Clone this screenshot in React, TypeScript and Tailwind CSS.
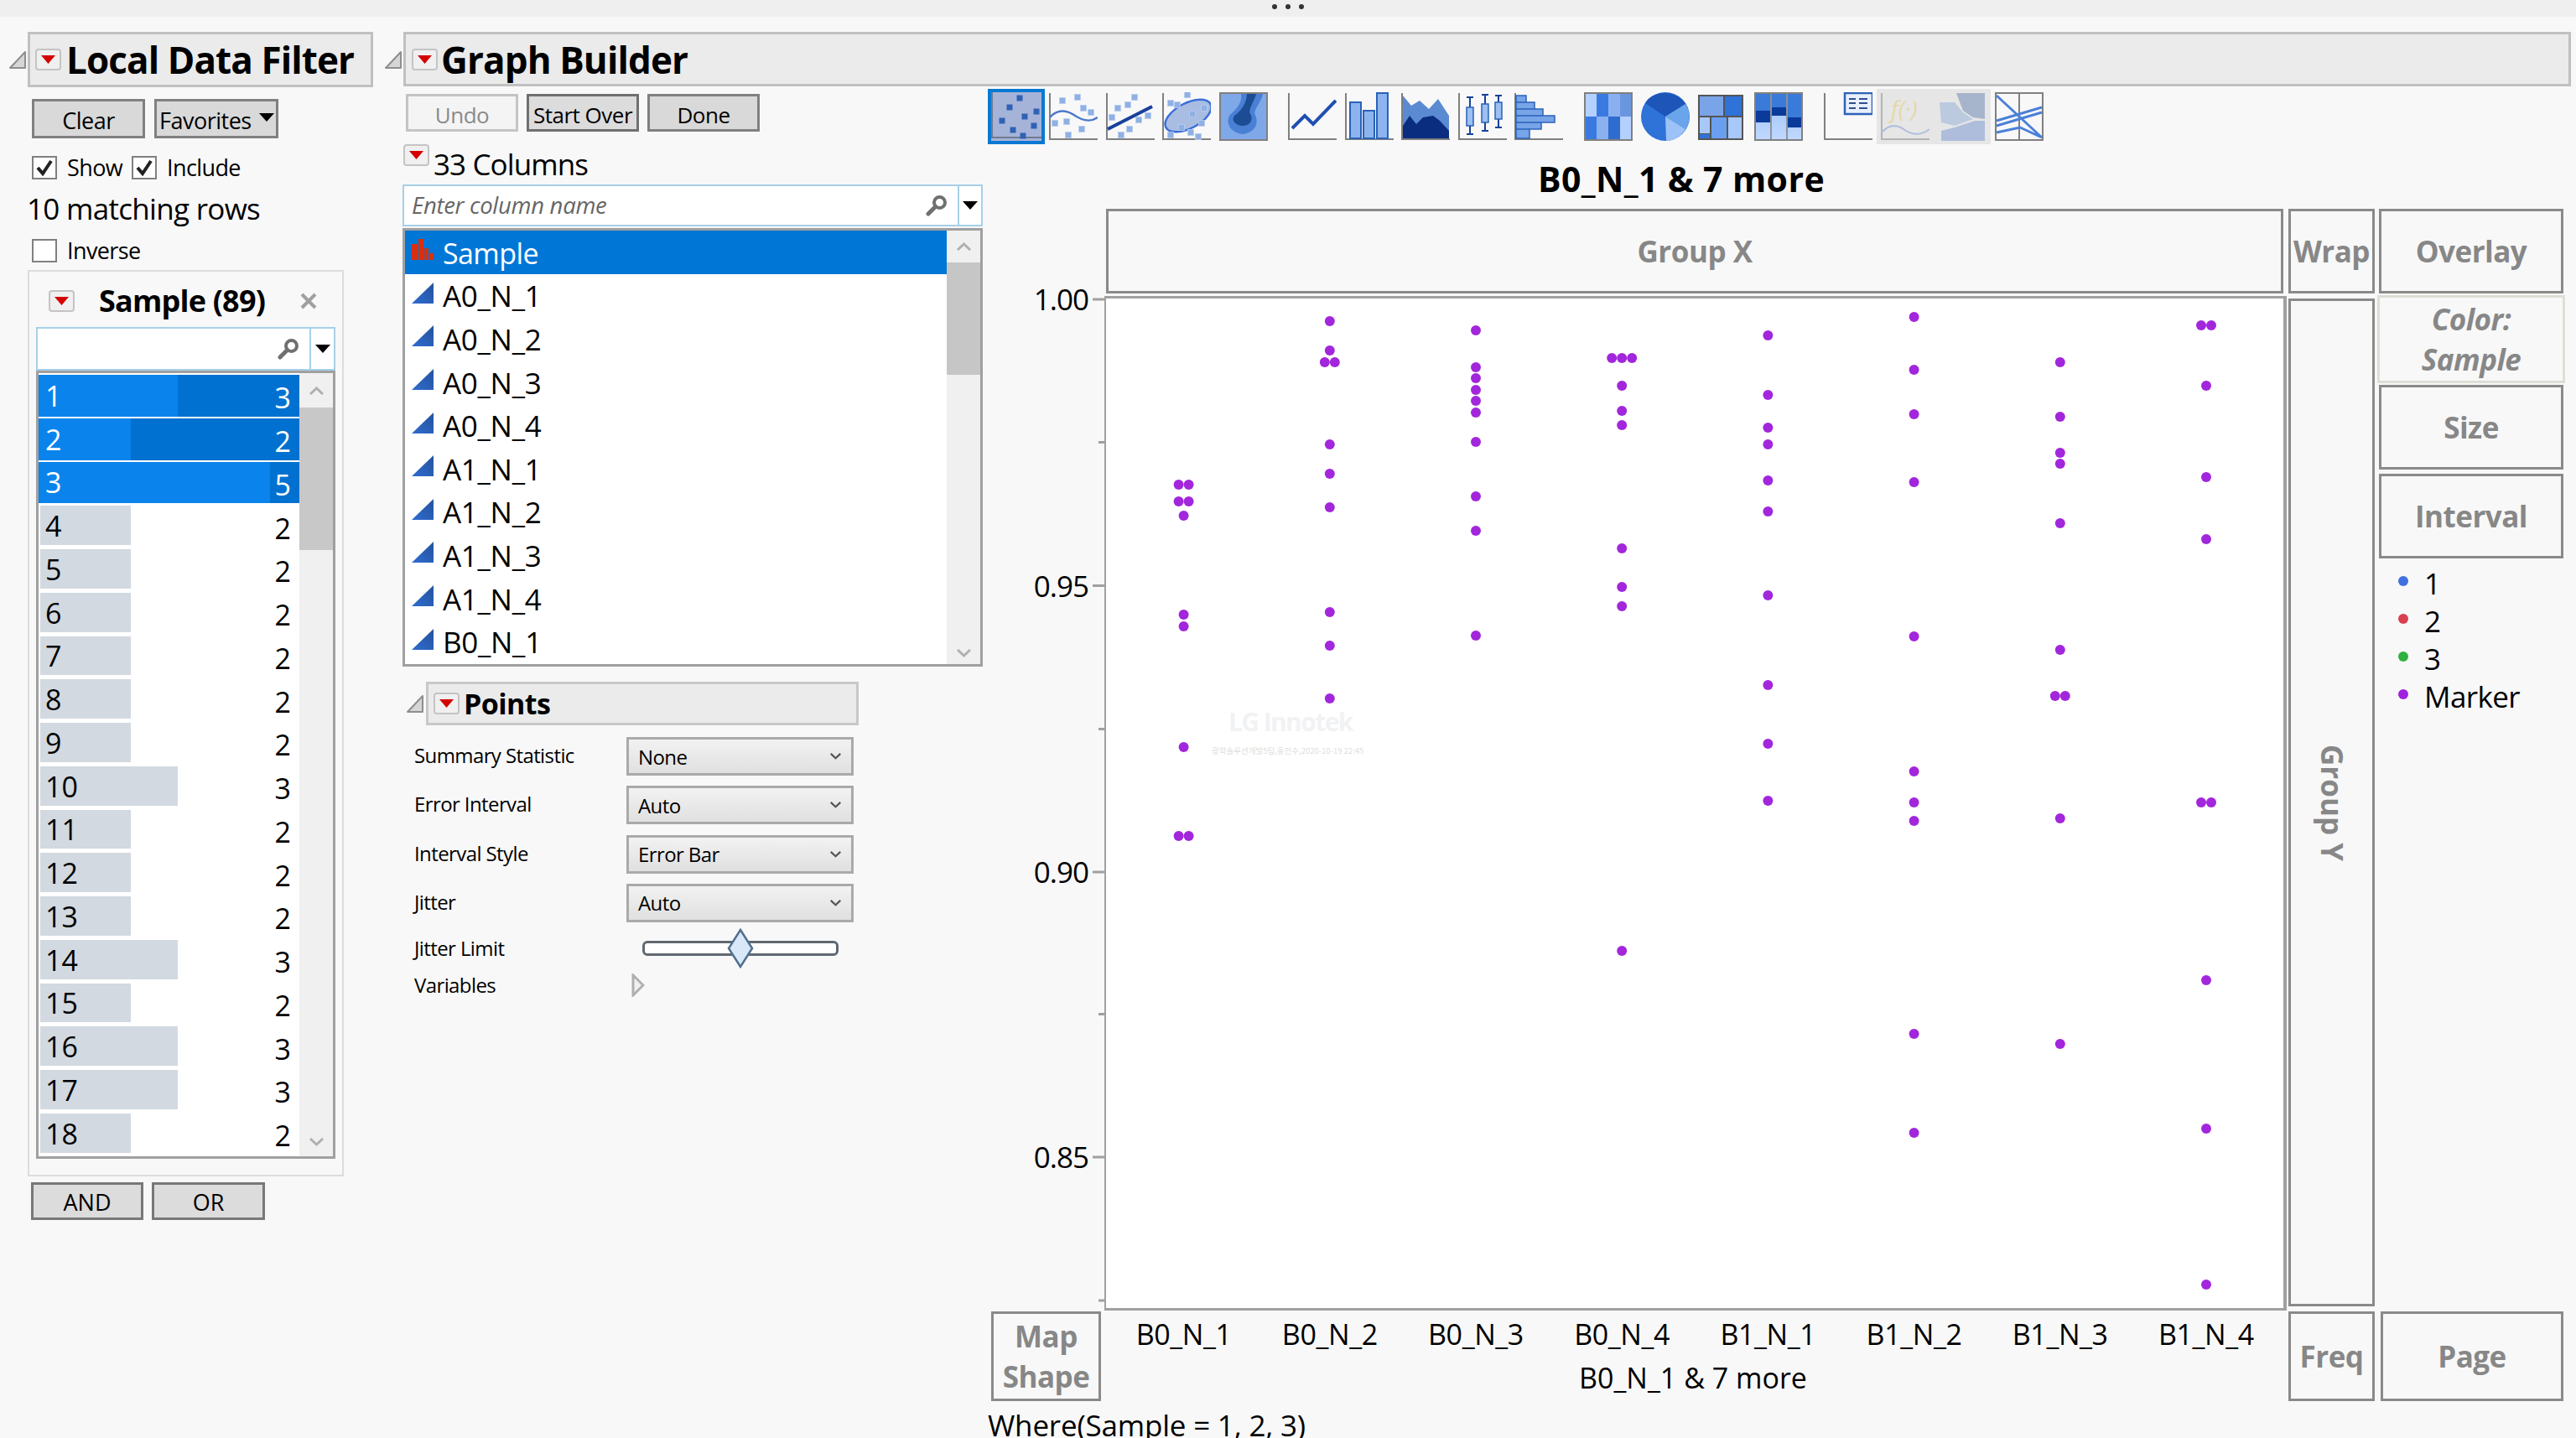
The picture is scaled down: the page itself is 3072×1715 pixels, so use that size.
import type { ReactNode } from "react";

const sampleRows = [
  [1, 3], [2, 2], [3, 5], [4, 2], [5, 2], [6, 2], [7, 2], [8, 2], [9, 2],
  [10, 3], [11, 2], [12, 2], [13, 2], [14, 3], [15, 2], [16, 3], [17, 3], [18, 2],
];
const barWidth: Record<number, number> = { 2: 108, 3: 164, 5: 274 };
const columns = ["A0_N_1", "A0_N_2", "A0_N_3", "A0_N_4", "A1_N_1", "A1_N_2", "A1_N_3", "A1_N_4", "B0_N_1"];
const axisNames = ["B0_N_1", "B0_N_2", "B0_N_3", "B0_N_4", "B1_N_1", "B1_N_2", "B1_N_3", "B1_N_4"];
const colX = [1411.6, 1585.8, 1760, 1934.2, 2108.4, 2282.6, 2456.8, 2631];

// [column, side offset in markers, y on the page]
const points: number[][] = [
  [0, -1, 578], [0, 1, 578], [0, -1, 598], [0, 1, 598], [0, 0, 615], [0, 0, 733], [0, 0, 747], [0, 0, 891], [0, -1, 997], [0, 1, 997],
  [1, 0, 383], [1, 0, 418], [1, -1, 432], [1, 1, 432], [1, 0, 530], [1, 0, 565], [1, 0, 605], [1, 0, 730], [1, 0, 770], [1, 0, 833],
  [2, 0, 394], [2, 0, 438], [2, 0, 451], [2, 0, 465], [2, 0, 478], [2, 0, 492], [2, 0, 527], [2, 0, 592], [2, 0, 633], [2, 0, 758],
  [3, -2, 427], [3, 0, 427], [3, 2, 427], [3, 0, 460], [3, 0, 490], [3, 0, 507], [3, 0, 654], [3, 0, 700], [3, 0, 723], [3, 0, 1134],
  [4, 0, 400], [4, 0, 471], [4, 0, 510], [4, 0, 530], [4, 0, 573], [4, 0, 610], [4, 0, 710], [4, 0, 817], [4, 0, 887], [4, 0, 955],
  [5, 0, 378], [5, 0, 441], [5, 0, 494], [5, 0, 575], [5, 0, 759], [5, 0, 920], [5, 0, 957], [5, 0, 979], [5, 0, 1233], [5, 0, 1351],
  [6, 0, 432], [6, 0, 497], [6, 0, 540], [6, 0, 553], [6, 0, 624], [6, 0, 775], [6, -1, 830], [6, 1, 830], [6, 0, 976], [6, 0, 1245],
  [7, -1, 388], [7, 1, 388], [7, 0, 460], [7, 0, 569], [7, 0, 643], [7, -1, 957], [7, 1, 957], [7, 0, 1169], [7, 0, 1346], [7, 0, 1532],
];
const yTicks = [
  { y: 357, label: "1.00" }, { y: 527.5 }, { y: 698.5, label: "0.95" }, { y: 869.5 },
  { y: 1040, label: "0.90" }, { y: 1209.5 }, { y: 1380, label: "0.85" }, { y: 1551 },
];

function RedButton() {
  return (
    <div className="flex h-[26px] w-[31px] shrink-0 items-center justify-center rounded-[4px] border-2 border-[#c4c4c4] bg-[#f0f0f0]">
      <svg width="17" height="10" viewBox="0 0 17 10"><path d="M0 0H17L8.5 10Z" fill="#d40000" /></svg>
    </div>
  );
}

function Disclosure() {
  return (
    <svg width="20" height="22" viewBox="0 0 20 22" className="shrink-0">
      <path d="M19 2V21H1Z" fill="#d6d6d6" stroke="#8e8e8e" strokeWidth="2" strokeLinejoin="round" />
    </svg>
  );
}

function Check({ on }: { on?: boolean }) {
  return (
    <div className="flex h-[28px] w-[30px] shrink-0 items-center justify-center border-2 border-[#808080] bg-white">
      {on && (
        <svg width="22" height="20" viewBox="0 0 22 20"><path d="M3 10L9 17L19 2" fill="none" stroke="#222" strokeWidth="4" /></svg>
      )}
    </div>
  );
}

function Magnifier() {
  return (
    <svg width="26" height="26" viewBox="0 0 26 26" className="shrink-0">
      <circle cx="16.5" cy="9.5" r="6.5" fill="none" stroke="#707070" strokeWidth="4" />
      <path d="M11.5 14.5L3 23" stroke="#707070" strokeWidth="5" strokeLinecap="round" />
    </svg>
  );
}

function DownTri() {
  return <svg width="18" height="10" viewBox="0 0 18 10" className="shrink-0"><path d="M0 0H18L9 10Z" fill="#000" /></svg>;
}

function Chevron({ up, w = 17, color = "#b0b0b0" }: { up?: boolean; w?: number; color?: string }) {
  return (
    <svg width={w} height="10" viewBox="0 0 17 10">
      <path d={up ? "M1 9L8.5 2L16 9" : "M1 1L8.5 8L16 1"} fill="none" stroke={color} strokeWidth="3" />
    </svg>
  );
}

function Btn({ children, className }: { children: ReactNode; className: string }) {
  return <div className={`flex items-center border-[3px] ${className}`}>{children}</div>;
}

function DropZone({ children, className }: { children: ReactNode; className: string }) {
  return (
    <div className={`flex shrink-0 items-center justify-center border-[3px] border-[#8a8a8a] text-center text-[35px] font-bold leading-[48px] tracking-[-0.5px] text-[#878787] ${className}`}>
      {children}
    </div>
  );
}

function Select({ value }: { value: string }) {
  return (
    <div className="flex h-[46px] w-[271px] items-center justify-between border-[3px] border-[#aaaaaa] bg-gradient-to-b from-[#f2f2f2] to-[#e0e0e0] pl-[11px] pr-[12px] text-[24px] tracking-[-0.6px]">
      <span className="pt-[1px]">{value}</span>
      <Chevron w={13} color="#555" />
    </div>
  );
}

function PointRow({ label, value }: { label: string; value: string }) {
  return (
    <div className="flex h-[46px] items-center">
      <div className="w-[253px] pb-[2px] text-[24px] tracking-[-0.6px]">{label}</div>
      <Select value={value} />
    </div>
  );
}

function Axis() {
  return <path d="M1 1V56H58" fill="none" stroke="#808080" strokeWidth="2" />;
}

function Squares({ pts, fill = "#8fb0e4" }: { pts: number[][]; fill?: string }) {
  return (
    <>
      {pts.map(([x, y], i) => (
        <rect key={i} x={x - 3.5} y={y - 3.5} width="7" height="7" fill={fill} stroke="#b8cdf0" strokeWidth="0.8" />
      ))}
    </>
  );
}

function Icon({ children }: { children: ReactNode }) {
  return <svg width="58" height="58" viewBox="0 0 58 58" className="shrink-0">{children}</svg>;
}

function ToolbarIcons() {
  return (
    <div className="ml-[6px] mt-[3px] flex h-[66px] items-center">
      <div className="flex items-center gap-[9.5px]">
        <div className="mr-[-4.5px] h-[66px] w-[68px] shrink-0 border-[4px] border-[#0a78d2] bg-[#a6b3d8]">
          <svg width="60" height="58" viewBox="0 0 60 58">
            <path d="M1 0V54H60" fill="none" stroke="#707a90" strokeWidth="2" />
            {[[34, 7], [22, 18], [54, 23], [40, 29], [13, 34], [51, 40], [26, 45], [38, 52]].map(([x, y], i) => (
              <rect key={i} x={x - 3.5} y={y - 3.5} width="7" height="7" fill="#2f62b4" />
            ))}
          </svg>
        </div>
        <Icon>
          <Axis />
          <Squares pts={[[16, 10], [34, 6], [41, 19], [50, 24], [7, 37], [21, 35], [39, 44], [23, 51]]} />
          <path d="M1 30C8 22 18 20 28 26C38 33 48 37 58 30" fill="none" stroke="#4a78c8" strokeWidth="2.5" />
        </Icon>
        <Icon>
          <Axis />
          <Squares pts={[[34, 6], [26, 15], [14, 19], [7, 30], [39, 33], [50, 28], [28, 44], [18, 51]]} />
          <path d="M2 44L55 17" stroke="#17409c" strokeWidth="4" />
        </Icon>
        <Icon>
          <Axis />
          <ellipse cx="31" cy="28" rx="30" ry="15" transform="rotate(-28 31 28)" fill="#a9bde2" stroke="#3a70d8" strokeWidth="2.5" />
          <Squares pts={[[30, 3], [10, 13], [18, 15], [36, 26], [50, 19], [47, 37], [23, 42], [34, 48], [43, 53], [10, 51]]} />
        </Icon>
        <Icon>
          <rect x="1" y="1" width="56" height="56" fill="#7fa8e8" stroke="#808080" strokeWidth="2" />
          <path d="M26 2H52C50 12 44 16 42 25C48 36 44 48 28 50C12 48 8 36 12 28C18 22 28 14 26 2Z" fill="#4a80d4" />
          <path d="M33 2H44C42 10 37 16 36 24C41 30 39 40 28 40C19 40 14 33 18 28C24 24 33 14 33 2Z" fill="#1c4c94" />
        </Icon>
      </div>
      <div className="ml-[24.5px] flex items-center gap-[9.5px]">
        <Icon>
          <Axis />
          <path d="M5 43L20 28L30 38L57 10" fill="none" stroke="#1f4fb0" strokeWidth="4" />
        </Icon>
        <Icon>
          <Axis />
          <path d="M6 55V12H19V55ZM22 55V22H35V55ZM38 55V1H51V55Z" fill="#8db4ee" stroke="#2a62b8" strokeWidth="2" />
        </Icon>
        <Icon>
          <Axis />
          <path d="M2 4L12 16L22 10L33 20L44 8L57 28V55H2Z" fill="#5a8ad2" />
          <path d="M2 40L10 28L18 38L26 30L38 28L46 34L57 46V55H2Z" fill="#0a2d80" />
        </Icon>
        <Icon>
          <Axis />
          <path d="M14 6V50M32 3V46M48 4V42M10 6H18M10 50H18M28 3H36M28 46H36M44 4H52M44 42H52" stroke="#17409c" strokeWidth="2" />
          <path d="M10 18H18V40H10ZM28 14H36V36H28ZM44 12H52V32H44Z" fill="#9cc0f2" stroke="#2a62b8" strokeWidth="1.5" />
        </Icon>
        <Icon>
          <Axis />
          <path d="M2 4H14V12H2ZM2 12H24V20H2ZM2 20H34V28H2ZM2 28H48V36H2ZM2 36H32V44H2ZM2 44H18V55H2Z" fill="#78a4e8" stroke="#2a62b8" strokeWidth="1.5" />
        </Icon>
      </div>
      <div className="ml-[25px] flex items-center gap-[9.5px]">
        <Icon>
          <rect x="1" y="1" width="14" height="28" fill="#b4d0ff" />
          <rect x="15" y="1" width="14" height="28" fill="#3a7ae0" />
          <rect x="29" y="1" width="14" height="28" fill="#8ab0f0" />
          <rect x="43" y="1" width="14" height="28" fill="#6a96e0" />
          <rect x="1" y="29" width="14" height="28" fill="#3a7ae0" />
          <rect x="15" y="29" width="14" height="28" fill="#8ab0f0" />
          <rect x="29" y="29" width="14" height="28" fill="#2f6cd0" />
          <rect x="43" y="29" width="14" height="28" fill="#b4d0ff" />
          <rect x="1" y="1" width="56" height="56" fill="none" stroke="#808080" strokeWidth="2" />
        </Icon>
        <Icon>
          <ellipse cx="29" cy="29" rx="29" ry="29" fill="#2f72d8" />
          <path d="M29 29L5 13C14 -3 42 -3 53 14Z" fill="#1e55b8" />
          <path d="M29 29L53 14C60 24 58 38 53 44Z" fill="#6aa4ea" />
          <path d="M29 29L53 44C48 52 40 58 30 58Z" fill="#9cc2f8" />
        </Icon>
        <Icon>
          <rect x="1" y="3" width="54" height="54" fill="#555" />
          <rect x="3" y="5" width="28" height="23" fill="#7aa4e8" />
          <rect x="33" y="5" width="20" height="23" fill="#2f72d8" />
          <rect x="3" y="30" width="12" height="19" fill="#a8c8f8" />
          <rect x="3" y="50" width="12" height="5" fill="#2f72d8" />
          <rect x="17" y="30" width="18" height="25" fill="#6a9ff0" />
          <rect x="37" y="30" width="16" height="25" fill="#a8c8f8" />
        </Icon>
        <Icon>
          <defs>
            <linearGradient id="mosaic" x1="0" y1="0" x2="0" y2="1">
              <stop offset="0" stopColor="#9cc0f8" />
              <stop offset="1" stopColor="#c0d8ff" />
            </linearGradient>
          </defs>
          <rect x="1" y="1" width="56" height="56" fill="url(#mosaic)" stroke="#808080" strokeWidth="2" />
          <path d="M2 2H19V22H2ZM21 2H38V18H21ZM40 2H56V30H40Z" fill="#3a7ad8" />
          <path d="M2 22H19V36H2ZM21 18H38V28H21ZM40 30H56V42H40Z" fill="#0a3a9a" />
          <path d="M20 1V57M39 1V57" stroke="#808080" strokeWidth="1.5" />
        </Icon>
      </div>
      <div className="ml-[25.5px] flex items-center">
        <Icon>
          <path d="M1 1V56H58" fill="none" stroke="#808080" strokeWidth="2" />
          <rect x="25" y="1" width="33" height="25" fill="#e8f0ff" stroke="#2f62b8" strokeWidth="2.5" />
          <path d="M30 8H38M42 8H52M30 13H38M42 13H52M30 19H38M42 19H52" stroke="#2f4f90" strokeWidth="2" />
        </Icon>
        <div className="ml-[5px] flex h-[66px] items-center gap-[10px] bg-[#e6e6e6] px-[5px]">
          <Icon>
            <path d="M1 1V56H58" fill="none" stroke="#b4b4b4" strokeWidth="2" />
            <text x="12" y="30" className="fill-[#e6d8a8] text-[28px] italic leading-none">f(·)</text>
            <path d="M1 48C10 38 20 38 30 46C40 52 50 50 58 44" fill="none" stroke="#b0c0dc" strokeWidth="2" />
          </Icon>
          <Icon>
            <path d="M22 1H56V32L42 30L30 22Z" fill="#a6b4cc" />
            <path d="M2 12H20L30 24L42 32L20 40L4 36Z" fill="#bccae0" />
            <path d="M4 58V46L20 42L44 34L56 34V58Z" fill="#aebddb" />
          </Icon>
        </div>
        <div className="ml-[5px]">
          <Icon>
            <rect x="1" y="1" width="56" height="56" fill="#f8f8f8" stroke="#808080" strokeWidth="2" />
            <path d="M29 1V57" stroke="#808080" strokeWidth="2" />
            <path d="M2 4L56 54M2 34L56 18M2 40L56 24M2 48L30 42L56 54" fill="none" stroke="#4a80d8" strokeWidth="3" />
          </Icon>
        </div>
      </div>
    </div>
  );
}

function LeftPanel() {
  return (
    <div className="flex w-[459px] shrink-0 flex-col">
      <div className="mt-[18px] flex items-center pl-[11px]">
        <Disclosure />
        <div className="ml-[2px] flex h-[66px] w-[412px] items-center border-[3px] border-[#c0c0c0] bg-[#ebebeb] pl-[6px] text-[44px] font-bold leading-[56px] tracking-[-0.9px]">
          <RedButton />
          <span className="ml-[6px]">Local Data Filter</span>
        </div>
      </div>
      <div className="ml-[38px] mt-[14px] flex gap-[11px] text-[27px] leading-[36px] tracking-[-0.5px]">
        <Btn className="h-[47px] w-[135px] justify-center border-[#808080] bg-[#d9d9d9] pt-[5px]">Clear</Btn>
        <Btn className="h-[47px] w-[148px] justify-between border-[#808080] bg-[#d9d9d9] pl-[3px] pr-[2px] pt-[5px]">
          <span>Favorites</span>
          <div className="mb-[9px]"><DownTri /></div>
        </Btn>
      </div>
      <div className="ml-[38px] mt-[21px] flex h-[28px] items-center text-[27px] tracking-[-0.6px]">
        <Check on />
        <span className="ml-[12px] mr-[11px] w-[66px]">Show</span>
        <Check on />
        <span className="ml-[12px]">Include</span>
      </div>
      <div className="ml-[32px] mt-[15px] flex h-[40px] items-center text-[35px] tracking-[-0.7px]">10 matching rows</div>
      <div className="ml-[38px] mt-[16px] flex h-[28px] items-center text-[27px] tracking-[-0.6px]">
        <Check />
        <span className="ml-[12px]">Inverse</span>
      </div>
      <div className="ml-[33px] mt-[9px] h-[1081px] w-[377px] border-2 border-[#dcdcdc]">
        <div className="mt-[17px] flex h-[36px] items-center pl-[23px]">
          <RedButton />
          <span className="ml-[29px] w-[240px] text-[36px] font-bold leading-[36px] tracking-[-0.8px]">Sample (89)</span>
          <svg width="20" height="20" viewBox="0 0 20 20"><path d="M2 2L18 18M18 2L2 18" stroke="#a0a0a0" strokeWidth="4" /></svg>
        </div>
        <div className="ml-[8px] mt-[13px] flex h-[52px] w-[357px] items-center border-2 border-[#a8d0e8] bg-white">
          <div className="flex flex-1 justify-end pr-[12px]"><Magnifier /></div>
          <div className="flex h-full w-[29px] items-center justify-center border-l-2 border-[#a8d0e8]"><DownTri /></div>
        </div>
        <div className="ml-[8px] flex h-[940px] w-[357px] overflow-hidden border-[3px] border-[#a0a0a0] bg-white">
          <div className="w-[311px] shrink-0 pt-[1px]">
            {sampleRows.map(([n, c]) => {
              const selected = n <= 3;
              return (
                <div key={n} className={`relative flex h-[51.75px] items-center justify-between pl-[8px] pr-[10px] text-[34px] leading-[44px] ${selected ? "text-white" : ""}`}>
                  {selected ? (
                    <div className="absolute inset-x-0 inset-y-[1px] bg-[#0071d0]">
                      <div className="h-full bg-[#0a84ec]" style={{ width: barWidth[c] + 2 }} />
                    </div>
                  ) : (
                    <div className="absolute bottom-[3px] left-[2px] top-[2px] bg-[#d2d9e0]" style={{ width: barWidth[c] }} />
                  )}
                  <span className="relative">{n}</span>
                  <span className="relative pt-[5px]">{c}</span>
                </div>
              );
            })}
          </div>
          <div className="flex flex-1 flex-col bg-[#f0f0f0]">
            <div className="flex h-[41px] items-center justify-center"><Chevron up /></div>
            <div className="h-[170px] bg-[#c8c8c8]" />
            <div className="flex flex-1 items-end justify-center pb-[12px]"><Chevron /></div>
          </div>
        </div>
      </div>
      <div className="ml-[37px] mt-[7px] flex gap-[10px] text-[27px] leading-[36px]">
        <Btn className="h-[45px] w-[134px] justify-center border-[#787878] bg-[#dcdcdc] pt-[3px]">AND</Btn>
        <Btn className="h-[45px] w-[135px] justify-center border-[#787878] bg-[#dcdcdc] pt-[3px]">OR</Btn>
      </div>
    </div>
  );
}

function ColumnPanel() {
  return (
    <div className="ml-[21px] flex w-[692px] shrink-0 flex-col">
      <div className="ml-[4px] mt-[9px] flex gap-[10px] text-[26px] leading-[34px] tracking-[-0.5px]">
        <Btn className="h-[45px] w-[134px] justify-center border-[#c4c4c4] bg-[#f4f4f4] pt-[4px] text-[#8a8a8a]">Undo</Btn>
        <Btn className="h-[45px] w-[134px] justify-center border-[#707070] bg-[#dcdcdc] pt-[4px]">Start Over</Btn>
        <Btn className="h-[45px] w-[134px] justify-center border-[#808080] bg-[#d9d9d9] pt-[4px]">Done</Btn>
      </div>
      <div className="ml-[1px] mt-[15px] flex h-[48px] items-start">
        <RedButton />
        <span className="ml-[5px] mt-[3px] text-[35px] leading-[42px] tracking-[-0.9px]">33 Columns</span>
      </div>
      <div className="flex h-[50px] items-center border-2 border-[#a8d0e8] bg-white">
        <span className="flex-1 pl-[9px] text-[27.5px] leading-[36px] italic tracking-[-0.3px] text-[#666]">Enter column name</span>
        <div className="pr-[12px]"><Magnifier /></div>
        <div className="flex h-full w-[28px] items-center justify-center border-l-2 border-[#a8d0e8]"><DownTri /></div>
      </div>
      <div className="mt-[2px] flex h-[523px] overflow-hidden border-[3px] border-[#a0a0a0] bg-white">
        <div className="w-[646px] shrink-0">
          <div className="flex h-[51.6px] items-center bg-[#0076d6] pl-[7px] text-[34px] leading-[44px] tracking-[-0.6px] text-white">
            <svg width="28" height="28" viewBox="0 0 28 28" className="mb-[5px] shrink-0">
              <path d="M1 7H8V26H1ZM9 1H15V26H9ZM16 12H21V26H16ZM22 18H27V26H22Z" fill="#d63010" />
            </svg>
            <span className="ml-[10px] pt-[2px]">Sample</span>
          </div>
          {columns.map((c) => (
            <div key={c} className="flex h-[51.6px] items-center pl-[7px] text-[35px] leading-[44px] tracking-[-0.3px]">
              <svg width="28" height="28" viewBox="0 0 28 28" className="mb-[5px] shrink-0">
                <defs>
                  <linearGradient id="cont" x1="0" y1="1" x2="1" y2="0">
                    <stop offset="0" stopColor="#2f6cd0" />
                    <stop offset="1" stopColor="#24529c" />
                  </linearGradient>
                </defs>
                <path d="M27 1V26H1Z" fill="url(#cont)" />
              </svg>
              <span className="ml-[10px] pt-[2px]">{c}</span>
            </div>
          ))}
        </div>
        <div className="flex flex-1 flex-col bg-[#f0f0f0]">
          <div className="flex h-[38px] items-center justify-center"><Chevron up /></div>
          <div className="h-[134px] bg-[#c6c6c6]" />
          <div className="flex flex-1 items-end justify-center pb-[8px]"><Chevron /></div>
        </div>
      </div>
      <div className="ml-[5px] mt-[18px] flex items-center">
        <Disclosure />
        <div className="ml-[3px] flex h-[52px] w-[516px] items-center border-[3px] border-[#c8c8c8] bg-[#ebebeb] pl-[6px] text-[34px] font-bold leading-[44px] tracking-[-0.6px]">
          <RedButton />
          <span className="ml-[5px]">Points</span>
        </div>
      </div>
      <div className="ml-[14px] mt-[14px] flex flex-col gap-[12.3px]">
        <PointRow label="Summary Statistic" value="None" />
        <PointRow label="Error Interval" value="Auto" />
        <PointRow label="Interval Style" value="Error Bar" />
        <PointRow label="Jitter" value="Auto" />
      </div>
      <div className="ml-[14px] mt-[7px] flex h-[48px] items-center text-[24px] tracking-[-0.6px]">
        <div className="w-[272px]">Jitter Limit</div>
        <div className="relative h-[18px] w-[234px] rounded-[6px] border-[3px] border-[#606870] bg-white">
          <svg width="32" height="48" viewBox="0 0 32 48" className="absolute left-[98px] top-[-18px]">
            <path d="M16 2L30 24L16 46L2 24Z" fill="#d8e8f8" stroke="#507090" strokeWidth="2.5" />
          </svg>
        </div>
      </div>
      <div className="ml-[14px] flex h-[40px] items-center text-[24px] tracking-[-0.6px]">
        <div className="w-[259px]">Variables</div>
        <svg width="16" height="28" viewBox="0 0 16 28"><path d="M2 2L14 14L2 26Z" fill="#f0f0f0" stroke="#b0b0b0" strokeWidth="3" /></svg>
      </div>
    </div>
  );
}

function Chart() {
  return (
    <div className="flex min-w-0 flex-1 flex-col">
      <ToolbarIcons />
      <div className="ml-[6px] flex h-[77px] w-[1654px] items-center justify-center pt-[5px] text-[41px] font-bold leading-[50px] tracking-[0.4px]">B0_N_1 &amp; 7 more</div>
      <div className="ml-[6px] flex h-[101px]">
        <div className="w-[141px] shrink-0" />
        <DropZone className="w-[1404px]">Group X</DropZone>
        <DropZone className="ml-[6px] w-[103px]">Wrap</DropZone>
        <DropZone className="ml-[5px] w-[220px]">Overlay</DropZone>
      </div>
      <div className="ml-[6px] mt-[3px] flex h-[1210px]">
        <svg width="139" height="1210" viewBox="1178 353 139 1210" className="shrink-0 overflow-visible">
          {yTicks.map((t) => (
            <g key={t.y}>
              <path d={`M${t.label ? 1303 : 1310} ${t.y}H1317`} stroke="#a0a0a0" strokeWidth="3" />
              {t.label && <text x="1298" y={t.y + 13} textAnchor="end" className="text-[35px] tracking-[-1px]">{t.label}</text>}
            </g>
          ))}
        </svg>
        <div className="h-[1210px] w-[1410px] shrink-0 border-b-[3px] border-l-2 border-r-4 border-t-[3px] border-[#a0a0a0] bg-white">
          <svg width="1404" height="1204" viewBox="1319 356 1404 1204">
            <text x="1465" y="872" className="fill-[#f1f2f4] text-[30px] font-bold tracking-[-1.6px]">LG Innotek</text>
            <text x="1445" y="899" className="fill-[#dedede] font-['Noto_Sans_CJK_KR',sans-serif] text-[9.5px]">광학솔루션개발5팀,홍민수,2020-10-19 22:45</text>
            {points.map(([c, side, y], i) => (
              <circle key={i} cx={colX[c] + side * 6} cy={y} r="6" fill="#a226dc" />
            ))}
          </svg>
        </div>
        <div className="ml-[2px] mt-[3px] flex h-[1202px] w-[103px] shrink-0 items-center justify-center border-[3px] border-[#8a8a8a] text-[35px] font-bold text-[#878787] [writing-mode:vertical-rl]">
          Group Y
        </div>
        <div className="ml-[3px] mt-[-1px] flex w-[224px] shrink-0 flex-col">
          <div className="flex h-[105px] flex-col items-center justify-center border-[3px] border-[#deded6] text-[35px] font-bold italic leading-[48px] tracking-[-0.5px] text-[#878787]">
            <span>Color:</span>
            <span>Sample</span>
          </div>
          <DropZone className="ml-[2px] mt-[2px] h-[101px] w-[220px]">Size</DropZone>
          <DropZone className="ml-[2px] mt-[5px] h-[101px] w-[220px]">Interval</DropZone>
          <div className="ml-[25px] mt-[7px] flex flex-col text-[35px] leading-[45px] tracking-[-0.6px]">
            {[["1", "bg-[#4070e0]"], ["2", "bg-[#d84050]"], ["3", "bg-[#30b040]"], ["Marker", "bg-[#a020e0]"]].map(([t, c]) => (
              <div key={t} className="flex h-[45px] items-center">
                <div className={`mb-[6px] h-[12px] w-[12px] rounded-full ${c}`} />
                <span className="ml-[19px]">{t}</span>
              </div>
            ))}
          </div>
        </div>
      </div>
      <div className="ml-[10px] mt-[1px] flex h-[107px]">
        <DropZone className="w-[131px]">
          <span>Map<br />Shape</span>
        </DropZone>
        <div className="ml-[4px] w-[1410px] shrink-0">
          <div className="grid h-[54px] grid-cols-[repeat(8,174.2px)] items-center pl-[7.5px] text-[34px] leading-[44px] tracking-[-0.4px]">
            {axisNames.map((n) => <div key={n} className="text-center">{n}</div>)}
          </div>
          <div className="flex h-[50px] items-center pl-[702px]">
            <div className="w-[0px] whitespace-nowrap text-[34px] leading-[44px] tracking-[0px]">
              <span className="inline-block -translate-x-1/2">B0_N_1 &amp; 7 more</span>
            </div>
          </div>
        </div>
        <DropZone className="ml-[2px] w-[103px]">Freq</DropZone>
        <DropZone className="ml-[7px] w-[218px]">Page</DropZone>
      </div>
      <div className="ml-[6px] mt-[14px] whitespace-nowrap text-[35px] leading-[30px] tracking-[-0.2px]">Where(Sample = 1, 2, 3)</div>
    </div>
  );
}

export default function App() {
  return (
    <div className="h-[1715px] w-[3072px] overflow-hidden bg-[#f8f8f8] font-['Open_Sans',sans-serif] text-black">
      <div className="flex h-[20px] items-start justify-center gap-[10px] bg-[#efefef] pt-[5px]">
        <div className="h-[6px] w-[6px] rounded-full bg-[#333]" />
        <div className="h-[6px] w-[6px] rounded-full bg-[#333]" />
        <div className="h-[6px] w-[6px] rounded-full bg-[#333]" />
      </div>
      <div className="flex">
        <LeftPanel />
        <div className="flex min-w-0 flex-1 flex-col">
          <div className="mt-[18px] flex items-center">
            <Disclosure />
            <div className="ml-[2px] flex h-[65px] w-[2585px] items-center border-[3px] border-[#c0c0c0] bg-[#ebebeb] pl-[7px] text-[44px] font-bold leading-[56px] tracking-[-0.9px]">
              <RedButton />
              <span className="ml-[4px]">Graph Builder</span>
            </div>
          </div>
          <div className="flex">
            <ColumnPanel />
            <Chart />
          </div>
        </div>
      </div>
    </div>
  );
}
